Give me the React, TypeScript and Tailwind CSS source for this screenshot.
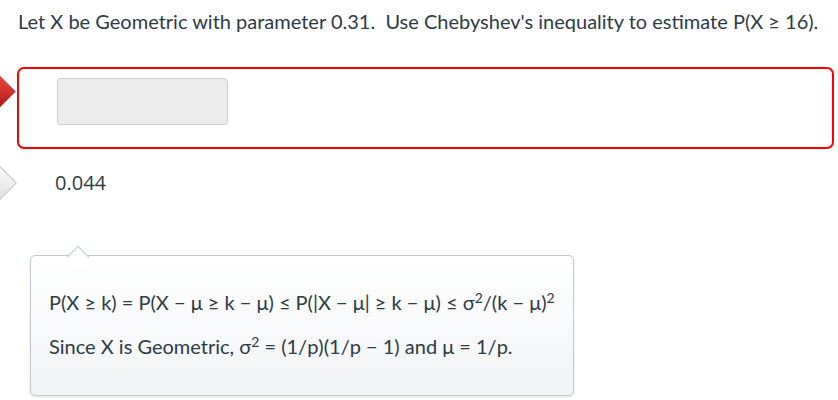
export default function App() {
  return (
    <div className="relative w-[838px] h-[400px] overflow-hidden bg-white text-[#2d3b45] font-['Lato','Noto_Sans',sans-serif]">
      <p className="pl-[18px] pt-[9px] text-[20px] leading-[24px] whitespace-nowrap">
        Let X be Geometric with parameter 0.31.&nbsp; Use Chebyshev's inequality to estimate P(X ≥ 16).
      </p>

      {/* wrong answer */}
      <div className="relative mt-[34px]">
        <div className="absolute left-[-12px] top-[13px] w-[23px] h-[23px] rotate-45 bg-gradient-to-br from-[#e8493f] to-[#b5161b]" />
        <div className="ml-[17px] mr-[4px] h-[82px] border-2 border-[#ff0000] rounded-[7px] pt-[9px] pl-[38px]">
          <div className="w-[171px] h-[47px] bg-[#ededed] border border-[#cfcfcf] rounded-[4px]" />
        </div>
      </div>

      {/* correct answer */}
      <div className="relative mt-[13px] h-[50px]">
        <div className="absolute left-[-12px] top-[9px] w-[24px] h-[24px] rotate-45 border border-[#c4c4c4] bg-gradient-to-br from-[#fbfbfb] to-[#e2e2e2]" />
        <div className="pl-[55px] pt-[8px] text-[20px] leading-[26px] text-[#2d3b45] font-['Open_Sans',sans-serif]">0.044</div>
      </div>

      {/* comment bubble */}
      <div className="relative ml-[30px] mt-[43px] w-[544px] h-[141px] rounded-[5px] border border-[#c2c9cf] bg-gradient-to-b from-white to-[#f1f3f5] shadow-[0_1px_2px_rgba(0,0,0,0.12)] pl-[18px] pt-[34px] text-[20px]">
        <div className="absolute left-[39px] top-[-7px] w-[16px] h-[16px] rotate-45 bg-white border-l border-t border-[#c2c9cf]" />
        <p className="leading-[24px] whitespace-nowrap">
          P(X ≥ k) = P(X − μ ≥ k − μ) ≤ P(|X − μ| ≥ k − μ) ≤ σ<sup className="text-[14px] leading-none">2</sup>/(k − μ)<sup className="text-[14px] leading-none">2</sup>
        </p>
        <p className="mt-[20px] leading-[24px] whitespace-nowrap">
          Since X is Geometric, σ<sup className="text-[14px] leading-none">2</sup> = (1/p)(1/p − 1) and μ = 1/p.
        </p>
      </div>
    </div>
  )
}
